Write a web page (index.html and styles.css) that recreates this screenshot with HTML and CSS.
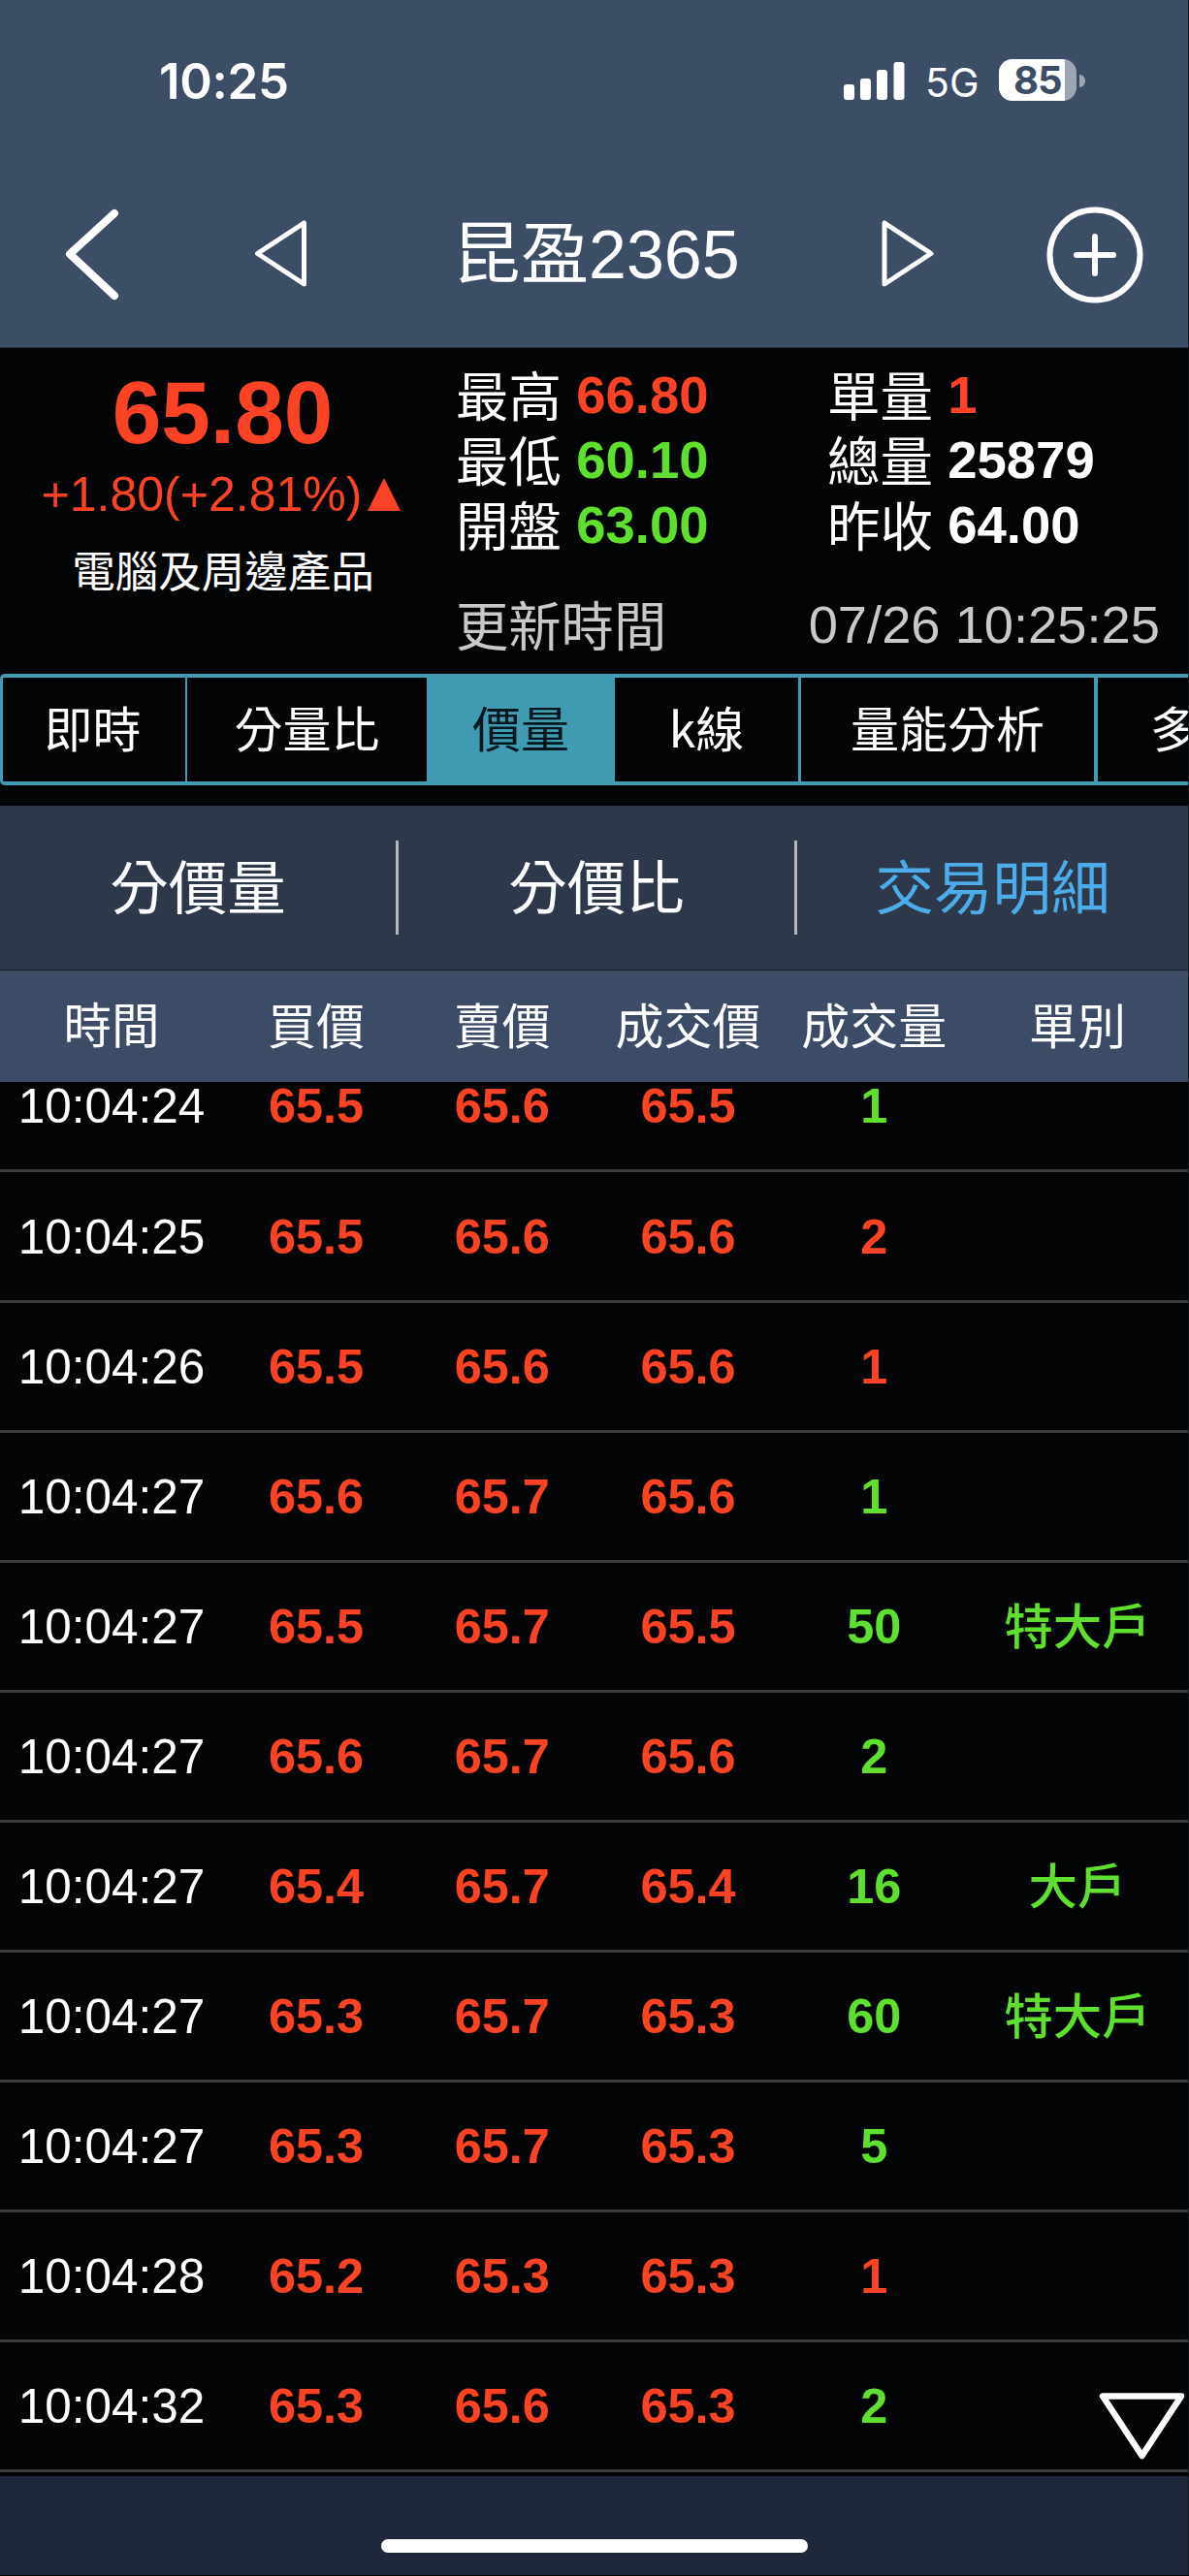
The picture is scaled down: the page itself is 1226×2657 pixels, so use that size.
FILE: index.html
```html
<!DOCTYPE html>
<html lang="zh-Hant">
<head>
<meta charset="utf-8">
<title>昆盈2365</title>
<link rel="stylesheet" href="styles.css">
</head>
<body>
<div class="app">
  <header class="top">
    <div class="status">
      <span class="clock">10:25</span>
      <svg class="signal" width="63" height="40" viewBox="0 0 63 40" fill="#fff"><rect x="0" y="23" width="11" height="16" rx="3"/><rect x="17" y="17" width="11" height="22" rx="3"/><rect x="34" y="8" width="11" height="31" rx="3"/><rect x="51.5" y="0" width="11" height="39" rx="3"/></svg>
      <span class="net">5G</span>
      <span class="battery"><span class="level">85</span></span>
      <span class="nub"></span>
    </div>
    <nav class="nav">
      <svg class="back" width="60" height="100" viewBox="0 0 60 100"><path d="M53 8 7 50 53 93" transform="translate(1 -1)"/></svg>
      <svg class="prev" width="60" height="74" viewBox="0 0 60 74"><path d="M5.500 35.500 53.500 4V67Z"/></svg>
      <h1 class="title">昆盈2365</h1>
      <svg class="next" width="60" height="74" viewBox="0 0 60 74"><path d="M54 35.500 6 4V67Z"/></svg>
      <svg class="add" width="104" height="104" viewBox="0 0 104 104"><circle cx="52" cy="52" r="46.500"/><path d="M33 52H71M52 33V71"/></svg>
    </nav>
  </header>

  <section class="quote">
    <div class="main">
      <div class="price">65.80</div>
      <div class="change">+1.80(+2.81%)<svg width="34" height="34" viewBox="0 0 34 34"><path d="M17 0 34 34H0Z" fill="#fc4325"/></svg></div>
      <div class="sector">電腦及周邊產品</div>
    </div>
    <div class="stats">
      <div class="pair"><div>最高 <b class="up">66.80</b></div><div>單量 <b class="up">1</b></div></div>
      <div class="pair"><div>最低 <b class="down">60.10</b></div><div>總量 <b>25879</b></div></div>
      <div class="pair"><div>開盤 <b class="down">63.00</b></div><div>昨收 <b>64.00</b></div></div>
      <div class="updated"><span>更新時間</span><span class="stamp">07/26 10:25:25</span></div>
    </div>
  </section>

  <div class="tabs">
    <span class="tab t1">即時</span><span class="tab t2">分量比</span><span class="tab t3 active">價量</span><span class="tab t4">k線</span><span class="tab t5">量能分析</span><span class="tab t6">多</span>
  </div>

  <div class="subtabs">
    <span>分價量</span><i></i><span>分價比</span><i></i><span class="on">交易明細</span>
  </div>

  <div class="row head"><span>時間</span><span>買價</span><span>賣價</span><span>成交價</span><span>成交量</span><span>單別</span></div>

  <div class="list">
    <div class="row"><span>10:04:24</span><b class="up">65.5</b><b class="up">65.6</b><b class="up">65.5</b><b class="down">1</b><span></span></div>
    <div class="row"><span>10:04:25</span><b class="up">65.5</b><b class="up">65.6</b><b class="up">65.6</b><b class="up">2</b><span></span></div>
    <div class="row"><span>10:04:26</span><b class="up">65.5</b><b class="up">65.6</b><b class="up">65.6</b><b class="up">1</b><span></span></div>
    <div class="row"><span>10:04:27</span><b class="up">65.6</b><b class="up">65.7</b><b class="up">65.6</b><b class="down">1</b><span></span></div>
    <div class="row"><span>10:04:27</span><b class="up">65.5</b><b class="up">65.7</b><b class="up">65.5</b><b class="down">50</b><span class="kind">特大戶</span></div>
    <div class="row"><span>10:04:27</span><b class="up">65.6</b><b class="up">65.7</b><b class="up">65.6</b><b class="down">2</b><span></span></div>
    <div class="row"><span>10:04:27</span><b class="up">65.4</b><b class="up">65.7</b><b class="up">65.4</b><b class="down">16</b><span class="kind">大戶</span></div>
    <div class="row"><span>10:04:27</span><b class="up">65.3</b><b class="up">65.7</b><b class="up">65.3</b><b class="down">60</b><span class="kind">特大戶</span></div>
    <div class="row"><span>10:04:27</span><b class="up">65.3</b><b class="up">65.7</b><b class="up">65.3</b><b class="down">5</b><span></span></div>
    <div class="row"><span>10:04:28</span><b class="up">65.2</b><b class="up">65.3</b><b class="up">65.3</b><b class="up">1</b><span></span></div>
    <div class="row"><span>10:04:32</span><b class="up">65.3</b><b class="up">65.6</b><b class="up">65.3</b><b class="down">2</b><span></span></div>
    <svg class="to-end" width="92" height="72" viewBox="0 0 92 72"><path d="M6 5.500H87L46.500 67Z"/></svg>
  </div>

  <footer class="bottom"><span class="home"></span></footer>
</div>
</body>
</html>
```
FILE: styles.css
```css
* { box-sizing: border-box; }

body {
  margin: 0;
  background: #030406;
  color: #fff;
  font-family: "Liberation Sans", "Noto Sans CJK TC", sans-serif;
}

.app {
  width: 1226px;
  height: 2657px;
  overflow: hidden;
  display: flex;
  flex-direction: column;
  border-right: 1px solid #10151d;
  border-bottom: 1px solid #030406;
}

.app > * { flex-shrink: 0; }

.up { color: #fc4325; }
.down { color: #5fe02f; }

.top {
  height: 359px;
  background: #3c4d66;
  border-bottom: 1px solid #232d3d;
}

.status {
  height: 167px;
  display: flex;
  align-items: center;
  font-family: Inter, sans-serif;
}

.clock {
  width: 706px;
  margin-left: 164px;
  font-size: 51px;
  font-weight: 600;
  letter-spacing: -0.3px;
}

.net {
  width: 76px;
  margin-left: 21px;
  margin-top: 2px;
  font-size: 41px;
}

.battery {
  width: 80px;
  height: 43px;
  margin-top: -2px;
  border-radius: 14px;
  overflow: hidden;
  background: #9ea6b3;
}

.level {
  display: block;
  width: 68px;
  height: 43px;
  padding-left: 15px;
  background: #fff;
  color: #3c4d66;
  font-size: 40px;
  font-weight: 700;
  line-height: 43px;
  letter-spacing: -1px;
}

.nub {
  width: 6px;
  height: 13px;
  margin-left: 3px;
  border-radius: 0 6px 6px 0;
  background: #9ea6b3;
}

.nav {
  height: 192px;
  display: flex;
  align-items: center;
  justify-content: flex-start;
}

.nav svg {
  flex: none;
  fill: none;
  stroke: #fff;
  stroke-width: 5;
  stroke-linecap: round;
  stroke-linejoin: round;
}

.nav .back { margin-left: 64px; stroke-width: 8; }
.nav .prev { margin-left: 136px; }
.nav .next { margin-left: 138px; }
.nav .add { margin-left: 111px; stroke-width: 6; }

.title {
  width: 301px;
  margin: 0 0 0 147px;
  font-size: 70px;
  font-weight: 400;
  line-height: 100px;
  white-space: nowrap;
}

.quote {
  height: 336px;
  display: flex;
}

.main {
  width: 470px;
  padding-top: 14px;
  text-align: center;
}

.price {
  padding-right: 11px;
  color: #fc4325;
  font-size: 91px;
  font-weight: 700;
  line-height: 106px;
}

.change {
  display: flex;
  justify-content: center;
  align-items: center;
  gap: 6px;
  padding-right: 14px;
  color: #fc4325;
  font-size: 50px;
  line-height: 62px;
}

.sector {
  padding: 17px 10px 0 0;
  font-size: 44.500px;
  line-height: 66px;
}

.stats {
  flex: 1;
  padding-top: 17px;
  font-size: 54.500px;
}

.pair {
  display: grid;
  grid-template-columns: 383px 1fr;
  height: 67px;
  line-height: 64px;
}

.pair b { vertical-align: 3px; }

.updated {
  display: flex;
  justify-content: space-between;
  margin-top: 37px;
  padding-right: 29px;
  color: #c9c9c9;
  font-size: 54.300px;
  line-height: 67px;
}

.stamp { line-height: 61px; }

.tabs {
  height: 115px;
  display: flex;
  overflow: hidden;
  border: solid #3f9cb3;
  border-width: 4px 0 4px 3px;
  border-radius: 5px 0 0 5px;
  font-family: "Noto Sans CJK TC", sans-serif;
  font-size: 50px;
}

.tab {
  flex: none;
  border-right: 3px solid #3f9cb3;
  text-align: center;
  line-height: 100px;
  white-space: nowrap;
}

.t1 { width: 190px; padding-right: 3px; border-right-width: 2px; }
.t2 { width: 250px; }
.t3 { width: 191px; }
.t4 { width: 192px; }
.t5 { width: 306px; border-right-width: 4px; }
.t6 { flex: 1; border: 0; padding-left: 54px; text-align: left; }

.active { background: #3f9cb3; color: #04171c; }

.subtabs {
  height: 170px;
  margin-top: 21px;
  display: grid;
  grid-template-columns: 408px 3px 408px 3px 403px;
  align-items: center;
  border-bottom: 1px solid #18202b;
  background: #2d394b;
  font-size: 60.500px;
  text-align: center;
}

.subtabs span { padding-bottom: 9px; }

.subtabs i {
  height: 97px;
  background: #b9b7b6;
}

.subtabs .on { color: #4cadea; }

.row {
  display: grid;
  grid-template-columns: 230px 192px 191.500px 192px 191.500px 228px;
  align-items: center;
  height: 134.090px;
  border-bottom: 3px solid #3c3c3e;
  font-size: 50.400px;
  text-align: center;
}

.row span:first-child { font-size: 49.500px; }

.row.head {
  height: 115px;
  padding-bottom: 8px;
  border: 0;
  background: #3c4b66;
  font-size: 50px;
}

.kind {
  padding-bottom: 6px;
  color: #5fe02f;
  font-weight: 500;
}

.list {
  position: relative;
  height: 1438px;
  overflow: hidden;
}

.list .row:first-child { margin-top: -40.600px; }

.to-end {
  position: absolute;
  right: 2px;
  bottom: 16px;
  fill: none;
  stroke: #fff;
  stroke-width: 6.500;
  stroke-linejoin: round;
}

.bottom {
  height: 102px;
  display: flex;
  justify-content: center;
  padding-top: 65px;
  background: #1e283a;
}

.home {
  width: 440px;
  height: 14px;
  border-radius: 7px;
  background: #fff;
}
```
